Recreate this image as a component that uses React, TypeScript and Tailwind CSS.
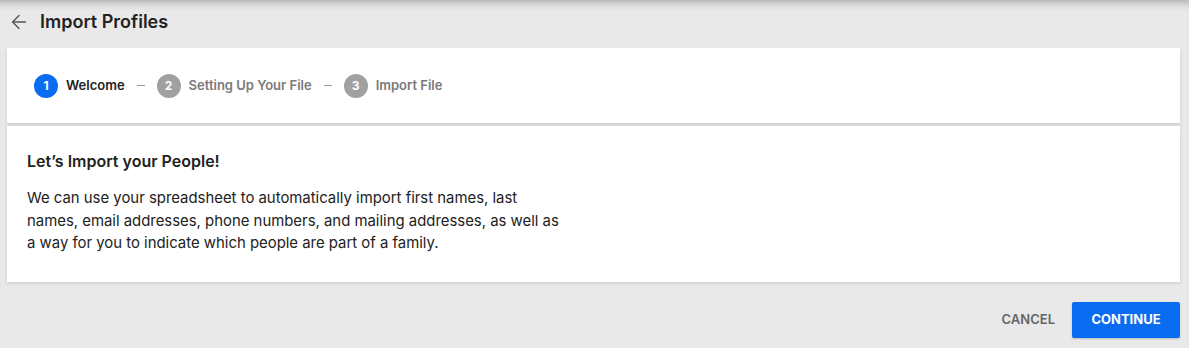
import { ArrowLeft } from "lucide-react";

interface Step {
  num: number;
  label: string;
  active?: boolean;
}

const steps: Step[] = [
  { num: 1, label: "Welcome", active: true },
  { num: 2, label: "Setting Up Your File" },
  { num: 3, label: "Import File" },
];

export default function App() {
  return (
    <div
      className="w-[1189px] h-[348px] bg-[#e9e9e9] shadow-[inset_0_10px_10px_-8px_rgba(0,0,0,0.3)] overflow-hidden"
      style={{ fontFamily: "Inter, 'Open Sans', sans-serif" }}
    >
      {/* Header */}
      <div className="flex items-center h-[43px] pl-[8px] gap-[10px]">
        <ArrowLeft size={22} strokeWidth={1.5} className="text-[#555]" />
        <h1 className="text-[18px] font-semibold text-[#222]">Import Profiles</h1>
      </div>

      <div className="pl-[7px] pr-[9px] pt-[5px]">
        {/* Steps */}
        <div className="bg-white h-[75px] flex items-center pl-[27px] shadow-[0_2px_4px_rgba(0,0,0,0.12)]">
          {steps.map((step, index) => (
            <div key={step.num} className="flex items-center">
              {index > 0 && <span className="w-[8px] h-px bg-[#999] mx-[12px]" />}
              <span
                className={`w-[24px] h-[24px] rounded-full flex items-center justify-center text-white text-[12px] font-bold ${
                  step.active ? "bg-[#0a6cf0]" : "bg-[#a0a0a0]"
                }`}
              >
                {step.num}
              </span>
              <span
                className={`ml-[8px] text-[13px] font-semibold ${
                  step.active ? "text-[#222]" : "text-[#7a7a7a]"
                }`}
              >
                {step.label}
              </span>
            </div>
          ))}
        </div>

        {/* Body */}
        <div className="bg-white mt-[3px] h-[156px] px-[20px] pt-[24px] shadow-[0_1px_3px_rgba(0,0,0,0.15)]">
          <h2 className="text-[16px] font-semibold text-[#222] leading-[22px]">
            Let’s Import your People!
          </h2>
          <p className="mt-[15px] text-[14.9px] leading-[22.5px] text-[#222]">
            We can use your spreadsheet to automatically import first names, last
            <br />
            names, email addresses, phone numbers, and mailing addresses, as well as
            <br />
            a way for you to indicate which people are part of a family.
          </p>
        </div>

        {/* Actions */}
        <div className="flex justify-end items-center gap-[17px] mt-[20px]">
          <button className="text-[13px] font-semibold text-[#666] uppercase">Cancel</button>
          <button className="w-[108px] h-[36px] bg-[#0a6cf0] text-white text-[13px] font-bold uppercase rounded-[2px] shadow-[0_1px_2px_rgba(0,0,0,0.2)]">
            Continue
          </button>
        </div>
      </div>
    </div>
  );
}
